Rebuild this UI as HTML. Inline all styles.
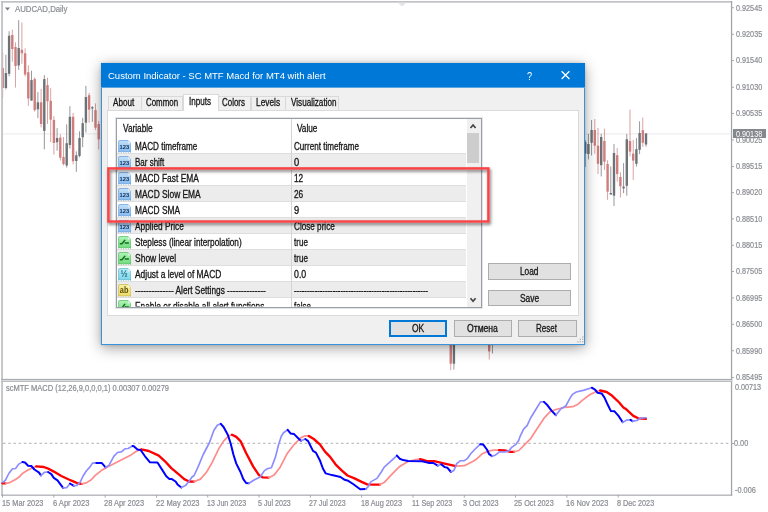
<!DOCTYPE html>
<html><head><meta charset="utf-8"><title>Custom Indicator - SC MTF Macd for MT4 with alert</title>
<style>
html,body{margin:0;padding:0;background:#fff;}
body{width:768px;height:512px;position:relative;overflow:hidden;filter:blur(0.4px);font-family:"Liberation Sans","DejaVu Sans",sans-serif;}
.t{position:absolute;white-space:pre;line-height:14px;height:14px;transform-origin:0 50%;display:block;}
#dlg{position:absolute;left:101px;top:63px;width:482px;height:280px;border:1px solid #3a92dc;background:#f0f0f0;box-shadow:0 3px 13px rgba(0,0,0,0.38),0 0 3px rgba(0,0,0,0.15);}
#title{position:absolute;left:101px;top:63px;width:484px;height:24px;background:#0078d7;border-bottom:1px solid #5aa4e0;}
#pane{position:absolute;left:107px;top:109.8px;width:469.8px;height:204.4px;background:#fff;border:1px solid #dadada;}
.tab{position:absolute;top:95.6px;height:14.2px;background:#f0f0f0;border:1px solid #d9d9d9;border-bottom:none;box-sizing:border-box;}
.tab.sel{top:93.7px;height:17.4px;background:#fff;border-color:#d9d9d9;}
#list{position:absolute;left:116px;top:117.5px;width:363.8px;height:188.6px;border:1px solid #9a9fa6;background:#fff;overflow:hidden;box-shadow:0 0 0 1px rgba(130,136,146,0.22);}
.row{position:absolute;left:0;width:349px;height:15px;border-bottom:1px solid #dedede;}
#coldiv{position:absolute;left:291.2px;top:118.5px;width:1px;height:188.4px;background:#d4d4d4;}
#sb{position:absolute;left:467px;top:118.5px;width:14px;height:188.5px;background:#f0f0f0;}
#thumb{position:absolute;left:467px;top:133px;width:12px;height:30px;background:#cdcdcd;}
.ic{position:absolute;}
.btn{position:absolute;box-sizing:border-box;background:#e1e1e1;border:1px solid #adadad;}
#hl{position:absolute;left:107.4px;top:167.4px;width:376.8px;height:51px;border:2px solid #e93a3e;filter:drop-shadow(1px 2px 2px rgba(0,0,0,0.55));}
#pbox{position:absolute;left:733px;top:129px;width:32.5px;height:9px;background:#85888d;}
</style></head><body>
<svg id="chart" width="768" height="512" viewBox="0 0 768 512" style="position:absolute;left:0;top:0">
<rect x="1.2" y="1" width="731" height="1.7" fill="#c0c2c5"/>
<rect x="730.9" y="1" width="1.3" height="494.6" fill="#a2a4a8"/>
<path d="M397.8,2.8 L406.4,2.8 L402.1,6.4 Z" fill="#e3e3e8"/>
<rect x="2.9" y="133.4" width="728.5" height="1" fill="#e9e9ea"/>
<path d="M5,7.4 L10,7.4 L7.5,10.4 Z" fill="#7c7c7c"/>
<rect x="2.25" y="52.6" width="0.9" height="45.2" fill="#cf7d7d" opacity="0.8"/><rect x="1.50" y="68.0" width="2.4" height="20.0" fill="#cf7d7d"/><rect x="5.45" y="54.7" width="0.9" height="34.6" fill="#6d7277" opacity="0.8"/><rect x="4.70" y="73.0" width="2.4" height="15.0" fill="#6d7277"/><rect x="8.65" y="31.2" width="0.9" height="45.2" fill="#6d7277" opacity="0.8"/><rect x="7.90" y="35.7" width="2.4" height="38.1" fill="#6d7277"/><rect x="11.85" y="29.6" width="0.9" height="32.1" fill="#cf7d7d" opacity="0.8"/><rect x="11.10" y="35.0" width="2.4" height="14.0" fill="#cf7d7d"/><rect x="15.05" y="42.4" width="0.9" height="45.2" fill="#cf7d7d" opacity="0.8"/><rect x="14.30" y="47.0" width="2.4" height="19.0" fill="#cf7d7d"/><rect x="18.25" y="20.2" width="0.9" height="49.6" fill="#6d7277" opacity="0.8"/><rect x="17.50" y="48.0" width="2.4" height="17.4" fill="#6d7277"/><rect x="21.45" y="22.3" width="0.9" height="41.5" fill="#cf7d7d" opacity="0.8"/><rect x="20.70" y="49.8" width="2.4" height="3.5" fill="#cf7d7d"/><rect x="24.65" y="48.3" width="0.9" height="28.1" fill="#cf7d7d" opacity="0.8"/><rect x="23.90" y="53.3" width="2.4" height="21.2" fill="#cf7d7d"/><rect x="27.85" y="65.3" width="0.9" height="40.6" fill="#cf7d7d" opacity="0.8"/><rect x="27.10" y="72.2" width="2.4" height="26.3" fill="#cf7d7d"/><rect x="31.05" y="70.7" width="0.9" height="29.9" fill="#6d7277" opacity="0.8"/><rect x="30.30" y="80.1" width="2.4" height="20.5" fill="#6d7277"/><rect x="34.25" y="77.2" width="0.9" height="34.3" fill="#cf7d7d" opacity="0.8"/><rect x="33.50" y="79.1" width="2.4" height="31.0" fill="#cf7d7d"/><rect x="37.45" y="92.1" width="0.9" height="26.1" fill="#6d7277" opacity="0.8"/><rect x="36.70" y="102.3" width="2.4" height="7.0" fill="#6d7277"/><rect x="40.65" y="89.0" width="0.9" height="38.4" fill="#cf7d7d" opacity="0.8"/><rect x="39.90" y="102.3" width="2.4" height="21.7" fill="#cf7d7d"/><rect x="43.85" y="75.2" width="0.9" height="74.1" fill="#6d7277" opacity="0.8"/><rect x="43.10" y="79.1" width="2.4" height="51.8" fill="#6d7277"/><rect x="47.05" y="77.7" width="0.9" height="46.2" fill="#cf7d7d" opacity="0.8"/><rect x="46.30" y="85.1" width="2.4" height="16.2" fill="#cf7d7d"/><rect x="50.25" y="88.2" width="0.9" height="54.0" fill="#cf7d7d" opacity="0.8"/><rect x="49.50" y="100.8" width="2.4" height="18.9" fill="#cf7d7d"/><rect x="53.45" y="116.1" width="0.9" height="38.4" fill="#cf7d7d" opacity="0.8"/><rect x="52.70" y="119.9" width="2.4" height="23.1" fill="#cf7d7d"/><rect x="56.65" y="128.1" width="0.9" height="22.6" fill="#6d7277" opacity="0.8"/><rect x="55.90" y="138.0" width="2.4" height="4.2" fill="#6d7277"/><rect x="59.85" y="134.3" width="0.9" height="26.2" fill="#cf7d7d" opacity="0.8"/><rect x="59.10" y="137.6" width="2.4" height="20.1" fill="#cf7d7d"/><rect x="63.05" y="137.0" width="0.9" height="28.5" fill="#cf7d7d" opacity="0.8"/><rect x="62.30" y="157.0" width="2.4" height="7.0" fill="#cf7d7d"/><rect x="66.25" y="124.3" width="0.9" height="43.3" fill="#6d7277" opacity="0.8"/><rect x="65.50" y="143.2" width="2.4" height="22.3" fill="#6d7277"/><rect x="69.45" y="106.2" width="0.9" height="42.4" fill="#6d7277" opacity="0.8"/><rect x="68.70" y="116.8" width="2.4" height="28.2" fill="#6d7277"/><rect x="72.65" y="113.0" width="0.9" height="51.3" fill="#cf7d7d" opacity="0.8"/><rect x="71.90" y="116.8" width="2.4" height="44.4" fill="#cf7d7d"/><rect x="75.85" y="151.4" width="0.9" height="20.4" fill="#6d7277" opacity="0.8"/><rect x="75.10" y="155.3" width="2.4" height="5.7" fill="#6d7277"/><rect x="79.05" y="131.3" width="0.9" height="26.0" fill="#6d7277" opacity="0.8"/><rect x="78.30" y="138.0" width="2.4" height="17.9" fill="#6d7277"/><rect x="82.25" y="117.8" width="0.9" height="29.4" fill="#6d7277" opacity="0.8"/><rect x="81.50" y="123.2" width="2.4" height="14.1" fill="#6d7277"/><rect x="85.45" y="85.8" width="0.9" height="46.7" fill="#6d7277" opacity="0.8"/><rect x="84.70" y="97.0" width="2.4" height="25.7" fill="#6d7277"/><rect x="88.65" y="92.8" width="0.9" height="29.9" fill="#cf7d7d" opacity="0.8"/><rect x="87.90" y="95.2" width="2.4" height="14.5" fill="#cf7d7d"/><rect x="91.85" y="106.2" width="0.9" height="15.7" fill="#6d7277" opacity="0.8"/><rect x="91.10" y="107.2" width="2.4" height="1.2" fill="#6d7277"/><rect x="95.05" y="103.4" width="0.9" height="26.6" fill="#cf7d7d" opacity="0.8"/><rect x="94.30" y="110.1" width="2.4" height="17.6" fill="#cf7d7d"/><rect x="98.25" y="121.0" width="0.9" height="28.3" fill="#cf7d7d" opacity="0.8"/><rect x="97.50" y="124.0" width="2.4" height="15.4" fill="#cf7d7d"/><rect x="645.55" y="133.4" width="0.9" height="13.3" fill="#6d7277" opacity="0.8"/><rect x="644.80" y="133.4" width="2.4" height="11.1" fill="#6d7277"/><rect x="642.35" y="117.6" width="0.9" height="29.3" fill="#cf7d7d" opacity="0.8"/><rect x="641.60" y="130.2" width="2.4" height="12.6" fill="#cf7d7d"/><rect x="639.15" y="121.3" width="0.9" height="32.8" fill="#6d7277" opacity="0.8"/><rect x="638.40" y="133.0" width="2.4" height="16.8" fill="#6d7277"/><rect x="635.95" y="138.1" width="0.9" height="28.5" fill="#6d7277" opacity="0.8"/><rect x="635.20" y="149.2" width="2.4" height="14.6" fill="#6d7277"/><rect x="632.75" y="139.9" width="0.9" height="40.0" fill="#cf7d7d" opacity="0.8"/><rect x="632.00" y="153.6" width="2.4" height="7.0" fill="#cf7d7d"/><rect x="629.55" y="109.6" width="0.9" height="46.8" fill="#cf7d7d" opacity="0.8"/><rect x="628.80" y="141.0" width="2.4" height="10.6" fill="#cf7d7d"/><rect x="626.35" y="134.0" width="0.9" height="61.7" fill="#6d7277" opacity="0.8"/><rect x="625.60" y="139.3" width="2.4" height="46.5" fill="#6d7277"/><rect x="623.15" y="163.1" width="0.9" height="30.0" fill="#6d7277" opacity="0.8"/><rect x="622.40" y="186.6" width="2.4" height="1.8" fill="#6d7277"/><rect x="619.95" y="172.3" width="0.9" height="25.2" fill="#cf7d7d" opacity="0.8"/><rect x="619.20" y="177.0" width="2.4" height="9.3" fill="#cf7d7d"/><rect x="616.75" y="148.0" width="0.9" height="33.7" fill="#cf7d7d" opacity="0.8"/><rect x="616.00" y="155.2" width="2.4" height="18.8" fill="#cf7d7d"/><rect x="613.55" y="144.0" width="0.9" height="62.0" fill="#6d7277" opacity="0.8"/><rect x="612.80" y="153.0" width="2.4" height="42.7" fill="#6d7277"/><rect x="610.35" y="166.4" width="0.9" height="28.1" fill="#6d7277" opacity="0.8"/><rect x="609.60" y="193.0" width="2.4" height="1.5" fill="#6d7277"/><rect x="607.15" y="160.3" width="0.9" height="39.5" fill="#cf7d7d" opacity="0.8"/><rect x="606.40" y="164.0" width="2.4" height="27.6" fill="#cf7d7d"/><rect x="603.95" y="128.7" width="0.9" height="41.3" fill="#cf7d7d" opacity="0.8"/><rect x="603.20" y="141.0" width="2.4" height="20.7" fill="#cf7d7d"/><rect x="600.75" y="133.8" width="0.9" height="42.6" fill="#6d7277" opacity="0.8"/><rect x="600.00" y="137.0" width="2.4" height="28.2" fill="#6d7277"/><rect x="597.55" y="128.0" width="0.9" height="46.0" fill="#cf7d7d" opacity="0.8"/><rect x="596.80" y="145.7" width="2.4" height="18.1" fill="#cf7d7d"/><rect x="594.35" y="119.0" width="0.9" height="34.8" fill="#cf7d7d" opacity="0.8"/><rect x="593.60" y="130.0" width="2.4" height="15.7" fill="#cf7d7d"/><rect x="591.15" y="120.0" width="0.9" height="35.5" fill="#6d7277" opacity="0.8"/><rect x="590.40" y="130.0" width="2.4" height="12.8" fill="#6d7277"/><rect x="587.95" y="134.0" width="0.9" height="25.4" fill="#6d7277" opacity="0.8"/><rect x="587.20" y="144.0" width="2.4" height="10.0" fill="#6d7277"/><rect x="584.75" y="140.0" width="0.9" height="27.0" fill="#6d7277" opacity="0.8"/><rect x="584.00" y="142.0" width="2.4" height="11.5" fill="#6d7277"/><rect x="450.30" y="330.0" width="0.9" height="40.2" fill="#cf7d7d" opacity="0.8"/><rect x="449.55" y="330.0" width="2.4" height="33.7" fill="#cf7d7d"/><rect x="453.45" y="330.0" width="0.9" height="39.6" fill="#6d7277" opacity="0.8"/><rect x="452.70" y="330.0" width="2.4" height="33.7" fill="#6d7277"/><rect x="488.75" y="330.0" width="0.9" height="29.6" fill="#cf7d7d" opacity="0.8"/><rect x="488.00" y="330.0" width="2.4" height="21.4" fill="#cf7d7d"/><rect x="491.95" y="330.0" width="0.9" height="23.5" fill="#6d7277" opacity="0.8"/><rect x="491.20" y="330.0" width="2.4" height="1.2" fill="#6d7277"/>
<rect x="1.2" y="1" width="1.7" height="494.6" fill="#bdbfc2"/>
<rect x="1.2" y="378.9" width="731" height="1" fill="#9a9da2"/>
<rect x="1.2" y="379.9" width="731" height="1" fill="#dcdddf"/>
<rect x="1.2" y="380.9" width="731" height="1" fill="#b3b5b9"/>
<rect x="1.2" y="494.6" width="731" height="1.1" fill="#a0a2a6"/>
<path d="M3,443.3 H731" stroke="#a9a9a9" stroke-width="0.9" stroke-dasharray="2.6,2.6" fill="none"/>
<path d="M2.5,483.3 L5.6,483.4" fill="none" stroke="#ff0000" stroke-width="2.35" stroke-linejoin="round" stroke-linecap="round"/><path d="M5.6,483.4 L8.8,482.9 L15.0,479.8 L18.8,477.3 L23.1,472.9 L28.8,469.5 L36.3,466.4" fill="none" stroke="#ff8c8c" stroke-width="1.7" stroke-linejoin="round" stroke-linecap="round"/><path d="M36.3,466.4 L43.8,467.0 L47.5,468.3 L53.8,471.6 L61.3,476.0 L68.8,479.5 L73.8,481.6 L78.1,483.5 L81.9,483.9" fill="none" stroke="#ff0000" stroke-width="2.35" stroke-linejoin="round" stroke-linecap="round"/><path d="M81.9,483.9 L86.3,482.9 L91.3,479.8 L95.0,475.6 L101.3,470.6 L107.5,466.9 L130.0,455.6 L136.3,451.3 L141.3,449.4" fill="none" stroke="#ff8c8c" stroke-width="1.7" stroke-linejoin="round" stroke-linecap="round"/><path d="M141.3,449.4 L148.8,451.0 L158.8,455.6 L165.0,461.3 L171.3,468.1 L178.8,474.4 L184.2,479.1 L189.1,481.5 L194.1,481.6" fill="none" stroke="#ff0000" stroke-width="2.35" stroke-linejoin="round" stroke-linecap="round"/><path d="M194.1,481.6 L200.4,479.1 L206.7,472.0 L212.3,462.2 L218.7,448.8 L223.6,441.1 L228.5,436.2 L232.0,434.8" fill="none" stroke="#ff8c8c" stroke-width="1.7" stroke-linejoin="round" stroke-linecap="round"/><path d="M232.0,434.8 L236.3,436.9 L240.5,441.1 L246.1,453.0 L253.1,466.4 L258.8,474.9 L263.0,477.4 L268.6,477.7" fill="none" stroke="#ff0000" stroke-width="2.35" stroke-linejoin="round" stroke-linecap="round"/><path d="M268.6,477.7 L274.2,474.9 L279.8,467.8 L287.0,453.8 L294.1,444.6 L301.1,437.6 L305.3,435.8 L308.8,435.9" fill="none" stroke="#ff8c8c" stroke-width="1.7" stroke-linejoin="round" stroke-linecap="round"/><path d="M308.8,435.9 L313.8,439.0 L320.1,444.6 L325.0,451.6 L329.9,456.6 L335.5,464.3 L341.9,470.6 L347.5,475.5 L354.5,478.4 L361.6,481.9 L367.2,484.4 L373.5,484.7 L379.9,484.6" fill="none" stroke="#ff0000" stroke-width="2.35" stroke-linejoin="round" stroke-linecap="round"/><path d="M379.9,484.6 L384.1,482.6 L391.3,474.9 L399.7,466.4 L408.1,461.5 L415.2,459.7 L420.1,459.1" fill="none" stroke="#ff8c8c" stroke-width="1.7" stroke-linejoin="round" stroke-linecap="round"/><path d="M420.1,459.1 L426.4,460.8 L434.1,461.1 L444.7,463.6 L455.9,466.1" fill="none" stroke="#ff0000" stroke-width="2.35" stroke-linejoin="round" stroke-linecap="round"/><path d="M455.9,466.1 L464.4,465.7 L472.8,461.5 L475.6,459.8 L482.2,453.8 L487.8,451.4 L493.4,450.0 L499.1,450.1" fill="none" stroke="#ff8c8c" stroke-width="1.7" stroke-linejoin="round" stroke-linecap="round"/><path d="M499.1,450.1 L504.7,450.3 L510.3,451.9 L514.1,451.8" fill="none" stroke="#ff0000" stroke-width="2.35" stroke-linejoin="round" stroke-linecap="round"/><path d="M514.1,451.8 L518.8,450.5 L524.4,444.8 L530.9,438.3 L537.7,427.8 L544.7,417.3 L550.3,411.6 L555.9,409.5 L564.4,407.4 L572.8,406.7 L578.4,403.9 L581.3,401.1 L589.7,394.8 L596.7,391.3 L600.2,390.5" fill="none" stroke="#ff8c8c" stroke-width="1.7" stroke-linejoin="round" stroke-linecap="round"/><path d="M600.2,390.5 L606.6,392.0 L612.2,395.8 L619.2,402.5 L623.4,407.4 L626.3,409.3 L633.3,415.9 L638.2,418.3 L645.9,418.8" fill="none" stroke="#ff0000" stroke-width="2.35" stroke-linejoin="round" stroke-linecap="round"/>
<path d="M3.1,482.3 L5.6,479.8 L8.8,473.5 L12.5,468.8 L15.6,468.5 L18.8,464.1 L22.5,462.0" fill="none" stroke="#8c8cff" stroke-width="1.65" stroke-linejoin="round" stroke-linecap="round"/><path d="M22.5,462.0 L25.0,462.5 L28.1,465.8 L31.3,466.0 L34.4,469.5 L38.8,472.3 L41.0,475.4" fill="none" stroke="#0000ff" stroke-width="2.0" stroke-linejoin="round" stroke-linecap="round"/><path d="M41.0,475.4 L44.4,472.3 L48.1,472.0" fill="none" stroke="#8c8cff" stroke-width="1.65" stroke-linejoin="round" stroke-linecap="round"/><path d="M48.1,472.0 L51.3,474.1 L53.8,477.9 L57.5,480.4 L63.1,487.9" fill="none" stroke="#0000ff" stroke-width="2.0" stroke-linejoin="round" stroke-linecap="round"/><path d="M63.1,487.9 L66.9,487.6 L70.0,483.5" fill="none" stroke="#8c8cff" stroke-width="1.65" stroke-linejoin="round" stroke-linecap="round"/><path d="M70.0,483.5 L73.8,485.8" fill="none" stroke="#0000ff" stroke-width="2.0" stroke-linejoin="round" stroke-linecap="round"/><path d="M73.8,485.8 L76.9,485.4 L80.0,482.3 L83.1,476.0 L86.3,471.0 L90.0,466.9 L92.5,463.1 L96.3,462.9" fill="none" stroke="#8c8cff" stroke-width="1.65" stroke-linejoin="round" stroke-linecap="round"/><path d="M96.3,462.9 L101.9,463.1 L105.6,467.3" fill="none" stroke="#0000ff" stroke-width="2.0" stroke-linejoin="round" stroke-linecap="round"/><path d="M105.6,467.3 L108.8,465.6 L113.8,456.3 L117.5,452.5 L121.3,451.9 L125.0,448.8 L128.1,448.5 L132.5,446.0" fill="none" stroke="#8c8cff" stroke-width="1.65" stroke-linejoin="round" stroke-linecap="round"/><path d="M132.5,446.0 L133.8,446.3 L137.5,449.4 L140.6,450.0 L145.0,456.3 L150.0,462.3 L157.5,462.5 L161.9,469.4 L166.3,476.3 L169.4,479.0 L171.9,479.1 L175.6,481.5 L177.5,484.4 L181.3,487.5" fill="none" stroke="#0000ff" stroke-width="2.0" stroke-linejoin="round" stroke-linecap="round"/><path d="M181.3,487.5 L185.6,485.4 L189.1,481.2 L192.0,477.0 L194.1,475.5 L198.3,466.4 L203.2,454.5 L209.5,442.5 L213.8,430.5 L217.3,425.3 L220.8,423.8" fill="none" stroke="#8c8cff" stroke-width="1.65" stroke-linejoin="round" stroke-linecap="round"/><path d="M220.8,423.8 L223.6,427.0 L227.8,434.8 L230.6,443.2 L233.4,454.5 L236.3,463.6 L240.5,472.0 L243.3,479.1 L246.1,483.0 L248.9,483.3" fill="none" stroke="#0000ff" stroke-width="2.0" stroke-linejoin="round" stroke-linecap="round"/><path d="M248.9,483.3 L254.5,479.8 L260.2,477.0 L264.4,470.6 L267.9,468.5 L271.4,467.8 L275.6,456.6 L278.4,445.3 L281.3,436.2 L283.5,432.7 L287.7,429.8" fill="none" stroke="#8c8cff" stroke-width="1.65" stroke-linejoin="round" stroke-linecap="round"/><path d="M287.7,429.8 L290.5,433.4 L294.1,434.1 L299.7,439.7 L301.1,440.8" fill="none" stroke="#0000ff" stroke-width="2.0" stroke-linejoin="round" stroke-linecap="round"/><path d="M301.1,440.8 L305.3,439.0" fill="none" stroke="#8c8cff" stroke-width="1.65" stroke-linejoin="round" stroke-linecap="round"/><path d="M305.3,439.0 L308.1,441.1 L313.0,450.9 L315.9,452.6 L320.1,460.8 L322.9,468.5 L325.7,473.4 L332.0,475.1 L340.5,477.0 L344.7,479.8 L348.2,480.8 L353.1,484.0 L360.2,489.2 L365.8,489.1" fill="none" stroke="#0000ff" stroke-width="2.0" stroke-linejoin="round" stroke-linecap="round"/><path d="M365.8,489.1 L368.6,486.1 L370.7,481.9 L377.0,478.4 L381.3,472.0 L384.2,467.1 L389.8,462.2 L396.9,455.6" fill="none" stroke="#8c8cff" stroke-width="1.65" stroke-linejoin="round" stroke-linecap="round"/><path d="M396.9,455.6 L399.7,458.7 L403.2,460.1 L408.1,461.1 L422.2,461.2 L428.5,462.9 L433.4,463.0 L437.7,465.7" fill="none" stroke="#0000ff" stroke-width="2.0" stroke-linejoin="round" stroke-linecap="round"/><path d="M437.7,465.7 L441.2,464.3" fill="none" stroke="#8c8cff" stroke-width="1.65" stroke-linejoin="round" stroke-linecap="round"/><path d="M441.2,464.3 L444.7,467.1 L447.5,467.8 L451.0,472.0" fill="none" stroke="#0000ff" stroke-width="2.0" stroke-linejoin="round" stroke-linecap="round"/><path d="M451.0,472.0 L453.8,470.6 L456.7,463.6 L460.2,460.8 L464.4,460.7 L467.2,458.7 L470.7,453.8 L474.7,449.5 L480.3,444.2" fill="none" stroke="#8c8cff" stroke-width="1.65" stroke-linejoin="round" stroke-linecap="round"/><path d="M480.3,444.2 L483.1,444.4 L486.9,449.5 L489.2,454.2 L492.0,456.1" fill="none" stroke="#0000ff" stroke-width="2.0" stroke-linejoin="round" stroke-linecap="round"/><path d="M492.0,456.1 L495.3,455.2 L499.5,451.9 L502.8,452.0 L505.2,451.9 L508.9,450.9 L511.3,447.7 L515.9,444.4 L518.8,440.2 L520.1,436.3 L523.6,429.2 L527.1,425.7 L530.6,418.0 L536.3,408.8 L540.5,401.8 L544.0,401.9" fill="none" stroke="#8c8cff" stroke-width="1.65" stroke-linejoin="round" stroke-linecap="round"/><path d="M544.0,401.9 L547.5,405.3 L551.7,410.9 L555.9,415.2" fill="none" stroke="#0000ff" stroke-width="2.0" stroke-linejoin="round" stroke-linecap="round"/><path d="M555.9,415.2 L560.9,408.8 L565.8,406.0 L570.7,396.9 L572.8,394.1 L576.3,392.0 L584.1,390.1 L591.8,387.7" fill="none" stroke="#8c8cff" stroke-width="1.65" stroke-linejoin="round" stroke-linecap="round"/><path d="M591.8,387.7 L595.3,389.8 L597.4,392.7 L601.6,393.4 L604.5,397.6 L608.0,405.3 L610.8,410.9 L614.3,411.2 L618.5,415.9 L622.7,422.2" fill="none" stroke="#0000ff" stroke-width="2.0" stroke-linejoin="round" stroke-linecap="round"/><path d="M622.7,422.2 L627.0,420.1 L630.5,419.8" fill="none" stroke="#8c8cff" stroke-width="1.65" stroke-linejoin="round" stroke-linecap="round"/><path d="M630.5,419.8 L632.6,421.1" fill="none" stroke="#0000ff" stroke-width="2.0" stroke-linejoin="round" stroke-linecap="round"/><path d="M632.6,421.1 L636.8,420.5 L640.3,418.3 L645.9,417.7" fill="none" stroke="#8c8cff" stroke-width="1.65" stroke-linejoin="round" stroke-linecap="round"/>
<rect x="2.1" y="495" width="0.9" height="2.6" fill="#a0a2a6"/><rect x="53.4" y="495" width="0.9" height="2.6" fill="#a0a2a6"/><rect x="104.7" y="495" width="0.9" height="2.6" fill="#a0a2a6"/><rect x="156.0" y="495" width="0.9" height="2.6" fill="#a0a2a6"/><rect x="207.3" y="495" width="0.9" height="2.6" fill="#a0a2a6"/><rect x="258.6" y="495" width="0.9" height="2.6" fill="#a0a2a6"/><rect x="309.9" y="495" width="0.9" height="2.6" fill="#a0a2a6"/><rect x="361.2" y="495" width="0.9" height="2.6" fill="#a0a2a6"/><rect x="412.5" y="495" width="0.9" height="2.6" fill="#a0a2a6"/><rect x="463.8" y="495" width="0.9" height="2.6" fill="#a0a2a6"/><rect x="515.1" y="495" width="0.9" height="2.6" fill="#a0a2a6"/><rect x="566.4" y="495" width="0.9" height="2.6" fill="#a0a2a6"/><rect x="617.7" y="495" width="0.9" height="2.6" fill="#a0a2a6"/><rect x="732" y="7.3" width="2" height="0.9" fill="#a0a2a6"/><rect x="732" y="33.8" width="2" height="0.9" fill="#a0a2a6"/><rect x="732" y="60.1" width="2" height="0.9" fill="#a0a2a6"/><rect x="732" y="86.8" width="2" height="0.9" fill="#a0a2a6"/><rect x="732" y="113.1" width="2" height="0.9" fill="#a0a2a6"/><rect x="732" y="139.5" width="2" height="0.9" fill="#a0a2a6"/><rect x="732" y="166.0" width="2" height="0.9" fill="#a0a2a6"/><rect x="732" y="192.2" width="2" height="0.9" fill="#a0a2a6"/><rect x="732" y="218.4" width="2" height="0.9" fill="#a0a2a6"/><rect x="732" y="244.8" width="2" height="0.9" fill="#a0a2a6"/><rect x="732" y="271.1" width="2" height="0.9" fill="#a0a2a6"/><rect x="732" y="297.5" width="2" height="0.9" fill="#a0a2a6"/><rect x="732" y="323.8" width="2" height="0.9" fill="#a0a2a6"/><rect x="732" y="350.3" width="2" height="0.9" fill="#a0a2a6"/><rect x="732" y="377.0" width="2" height="0.9" fill="#a0a2a6"/><rect x="732" y="443.1" width="2" height="0.9" fill="#a0a2a6"/></svg>
<div id="dlg"></div>
<div id="title"></div>
<div id="pane"></div>
<div class="tab" style="left:108.3px;width:33.4px"></div>
<div class="tab" style="left:141.2px;width:42.1px"></div>
<div class="tab" style="left:218.2px;width:33px"></div>
<div class="tab" style="left:250.7px;width:35.1px"></div>
<div class="tab" style="left:285.3px;width:54px"></div>
<div class="tab sel" style="left:182.6px;width:36.4px"></div>
<div id="list"><div class="row" style="top:19.5px;background:#ffffff"></div><div class="row" style="top:35.5px;background:#ececec"></div><div class="row" style="top:51.5px;background:#ffffff"></div><div class="row" style="top:67.5px;background:#ececec"></div><div class="row" style="top:83.5px;background:#ffffff"></div><div class="row" style="top:99.5px;background:#ececec"></div><div class="row" style="top:115.5px;background:#ffffff"></div><div class="row" style="top:131.5px;background:#ececec"></div><div class="row" style="top:147.5px;background:#ffffff"></div><div class="row" style="top:163.5px;background:#ececec"></div><div class="row" style="top:179.5px;background:#ffffff"></div></div>
<div id="coldiv"></div>
<div id="sb"></div><div id="thumb"></div>
<svg style="position:absolute;left:466px;top:118px" width="15" height="190" viewBox="0 0 15 190"><path d="M4.5,10 L7.05,7 L9.6,10" stroke="#454545" stroke-width="1.7" fill="none"/><path d="M4.5,180.2 L7.05,183.2 L9.6,180.2" stroke="#454545" stroke-width="1.7" fill="none"/></svg>
<div style="position:absolute;left:0;top:0;width:768px;height:306.6px;overflow:hidden"><svg class="ic" style="left:118.1px;top:140.1px" width="13.4" height="12.8" viewBox="0 0 13.4 12.8"><defs><linearGradient id="gb140" x1="0" y1="0" x2="0" y2="1"><stop offset="0" stop-color="#c4e0f8"/><stop offset="1" stop-color="#86baec"/></linearGradient></defs><path d="M0.6,1.6 Q0.6,0.5 1.7,0.5 L10,0.5 L12.9,3.4 L12.9,12.4 L11.6,11.4 L10.4,12.3 L9.2,11.4 L8,12.3 L6.8,11.4 L5.6,12.3 L4.4,11.4 L3.2,12.3 L2,11.4 L0.6,12.3 Z" fill="url(#gb140)" stroke="#4a90d8" stroke-width="0.7" stroke-opacity="0.85"/><path d="M10,0.5 L10,3.4 L12.9,3.4 Z" fill="#ffffff" fill-opacity="0.55"/><text x="6.4" y="8.6" font-size="5.8" font-weight="bold" text-anchor="middle" fill="#0c2c5c" font-family="Liberation Sans, sans-serif">123</text></svg><svg class="ic" style="left:118.1px;top:156.1px" width="13.4" height="12.8" viewBox="0 0 13.4 12.8"><defs><linearGradient id="gb156" x1="0" y1="0" x2="0" y2="1"><stop offset="0" stop-color="#c4e0f8"/><stop offset="1" stop-color="#86baec"/></linearGradient></defs><path d="M0.6,1.6 Q0.6,0.5 1.7,0.5 L10,0.5 L12.9,3.4 L12.9,12.4 L11.6,11.4 L10.4,12.3 L9.2,11.4 L8,12.3 L6.8,11.4 L5.6,12.3 L4.4,11.4 L3.2,12.3 L2,11.4 L0.6,12.3 Z" fill="url(#gb156)" stroke="#4a90d8" stroke-width="0.7" stroke-opacity="0.85"/><path d="M10,0.5 L10,3.4 L12.9,3.4 Z" fill="#ffffff" fill-opacity="0.55"/><text x="6.4" y="8.6" font-size="5.8" font-weight="bold" text-anchor="middle" fill="#0c2c5c" font-family="Liberation Sans, sans-serif">123</text></svg><svg class="ic" style="left:118.1px;top:172.1px" width="13.4" height="12.8" viewBox="0 0 13.4 12.8"><defs><linearGradient id="gb172" x1="0" y1="0" x2="0" y2="1"><stop offset="0" stop-color="#c4e0f8"/><stop offset="1" stop-color="#86baec"/></linearGradient></defs><path d="M0.6,1.6 Q0.6,0.5 1.7,0.5 L10,0.5 L12.9,3.4 L12.9,12.4 L11.6,11.4 L10.4,12.3 L9.2,11.4 L8,12.3 L6.8,11.4 L5.6,12.3 L4.4,11.4 L3.2,12.3 L2,11.4 L0.6,12.3 Z" fill="url(#gb172)" stroke="#4a90d8" stroke-width="0.7" stroke-opacity="0.85"/><path d="M10,0.5 L10,3.4 L12.9,3.4 Z" fill="#ffffff" fill-opacity="0.55"/><text x="6.4" y="8.6" font-size="5.8" font-weight="bold" text-anchor="middle" fill="#0c2c5c" font-family="Liberation Sans, sans-serif">123</text></svg><svg class="ic" style="left:118.1px;top:188.1px" width="13.4" height="12.8" viewBox="0 0 13.4 12.8"><defs><linearGradient id="gb188" x1="0" y1="0" x2="0" y2="1"><stop offset="0" stop-color="#c4e0f8"/><stop offset="1" stop-color="#86baec"/></linearGradient></defs><path d="M0.6,1.6 Q0.6,0.5 1.7,0.5 L10,0.5 L12.9,3.4 L12.9,12.4 L11.6,11.4 L10.4,12.3 L9.2,11.4 L8,12.3 L6.8,11.4 L5.6,12.3 L4.4,11.4 L3.2,12.3 L2,11.4 L0.6,12.3 Z" fill="url(#gb188)" stroke="#4a90d8" stroke-width="0.7" stroke-opacity="0.85"/><path d="M10,0.5 L10,3.4 L12.9,3.4 Z" fill="#ffffff" fill-opacity="0.55"/><text x="6.4" y="8.6" font-size="5.8" font-weight="bold" text-anchor="middle" fill="#0c2c5c" font-family="Liberation Sans, sans-serif">123</text></svg><svg class="ic" style="left:118.1px;top:204.1px" width="13.4" height="12.8" viewBox="0 0 13.4 12.8"><defs><linearGradient id="gb204" x1="0" y1="0" x2="0" y2="1"><stop offset="0" stop-color="#c4e0f8"/><stop offset="1" stop-color="#86baec"/></linearGradient></defs><path d="M0.6,1.6 Q0.6,0.5 1.7,0.5 L10,0.5 L12.9,3.4 L12.9,12.4 L11.6,11.4 L10.4,12.3 L9.2,11.4 L8,12.3 L6.8,11.4 L5.6,12.3 L4.4,11.4 L3.2,12.3 L2,11.4 L0.6,12.3 Z" fill="url(#gb204)" stroke="#4a90d8" stroke-width="0.7" stroke-opacity="0.85"/><path d="M10,0.5 L10,3.4 L12.9,3.4 Z" fill="#ffffff" fill-opacity="0.55"/><text x="6.4" y="8.6" font-size="5.8" font-weight="bold" text-anchor="middle" fill="#0c2c5c" font-family="Liberation Sans, sans-serif">123</text></svg><svg class="ic" style="left:118.1px;top:220.1px" width="13.4" height="12.8" viewBox="0 0 13.4 12.8"><defs><linearGradient id="gb220" x1="0" y1="0" x2="0" y2="1"><stop offset="0" stop-color="#c4e0f8"/><stop offset="1" stop-color="#86baec"/></linearGradient></defs><path d="M0.6,1.6 Q0.6,0.5 1.7,0.5 L10,0.5 L12.9,3.4 L12.9,12.4 L11.6,11.4 L10.4,12.3 L9.2,11.4 L8,12.3 L6.8,11.4 L5.6,12.3 L4.4,11.4 L3.2,12.3 L2,11.4 L0.6,12.3 Z" fill="url(#gb220)" stroke="#4a90d8" stroke-width="0.7" stroke-opacity="0.85"/><path d="M10,0.5 L10,3.4 L12.9,3.4 Z" fill="#ffffff" fill-opacity="0.55"/><text x="6.4" y="8.6" font-size="5.8" font-weight="bold" text-anchor="middle" fill="#0c2c5c" font-family="Liberation Sans, sans-serif">123</text></svg><svg class="ic" style="left:118.1px;top:236.1px" width="13.4" height="12.8" viewBox="0 0 13.4 12.8"><defs><linearGradient id="gg236" x1="0" y1="0" x2="0" y2="1"><stop offset="0" stop-color="#b0f4b8"/><stop offset="1" stop-color="#6edc7a"/></linearGradient></defs><path d="M0.6,1.6 Q0.6,0.5 1.7,0.5 L10,0.5 L12.9,3.4 L12.9,12.4 L11.6,11.4 L10.4,12.3 L9.2,11.4 L8,12.3 L6.8,11.4 L5.6,12.3 L4.4,11.4 L3.2,12.3 L2,11.4 L0.6,12.3 Z" fill="url(#gg236)" stroke="#3cae4c" stroke-width="0.7" stroke-opacity="0.85"/><path d="M10,0.5 L10,3.4 L12.9,3.4 Z" fill="#ffffff" fill-opacity="0.55"/><path d="M2.4,7.8 L4,7.8 L6.8,4.2 M7.2,7 L10.4,7" stroke="#14701f" stroke-width="1.45" fill="none" stroke-linecap="round"/></svg><svg class="ic" style="left:118.1px;top:252.1px" width="13.4" height="12.8" viewBox="0 0 13.4 12.8"><defs><linearGradient id="gg252" x1="0" y1="0" x2="0" y2="1"><stop offset="0" stop-color="#b0f4b8"/><stop offset="1" stop-color="#6edc7a"/></linearGradient></defs><path d="M0.6,1.6 Q0.6,0.5 1.7,0.5 L10,0.5 L12.9,3.4 L12.9,12.4 L11.6,11.4 L10.4,12.3 L9.2,11.4 L8,12.3 L6.8,11.4 L5.6,12.3 L4.4,11.4 L3.2,12.3 L2,11.4 L0.6,12.3 Z" fill="url(#gg252)" stroke="#3cae4c" stroke-width="0.7" stroke-opacity="0.85"/><path d="M10,0.5 L10,3.4 L12.9,3.4 Z" fill="#ffffff" fill-opacity="0.55"/><path d="M2.4,7.8 L4,7.8 L6.8,4.2 M7.2,7 L10.4,7" stroke="#14701f" stroke-width="1.45" fill="none" stroke-linecap="round"/></svg><svg class="ic" style="left:118.1px;top:268.1px" width="13.4" height="12.8" viewBox="0 0 13.4 12.8"><defs><linearGradient id="gc268" x1="0" y1="0" x2="0" y2="1"><stop offset="0" stop-color="#b8ecf6"/><stop offset="1" stop-color="#7ed4e8"/></linearGradient></defs><path d="M0.6,1.6 Q0.6,0.5 1.7,0.5 L10,0.5 L12.9,3.4 L12.9,12.4 L11.6,11.4 L10.4,12.3 L9.2,11.4 L8,12.3 L6.8,11.4 L5.6,12.3 L4.4,11.4 L3.2,12.3 L2,11.4 L0.6,12.3 Z" fill="url(#gc268)" stroke="#40a4c0" stroke-width="0.7" stroke-opacity="0.85"/><path d="M10,0.5 L10,3.4 L12.9,3.4 Z" fill="#ffffff" fill-opacity="0.55"/><text x="6.2" y="8.6" font-size="8.6" font-weight="bold" text-anchor="middle" fill="#146a84" font-family="Liberation Sans, sans-serif">½</text></svg><svg class="ic" style="left:118.1px;top:284.1px" width="13.4" height="12.8" viewBox="0 0 13.4 12.8"><defs><linearGradient id="gy284" x1="0" y1="0" x2="0" y2="1"><stop offset="0" stop-color="#f8f0a4"/><stop offset="1" stop-color="#ecdc64"/></linearGradient></defs><path d="M0.6,1.6 Q0.6,0.5 1.7,0.5 L10,0.5 L12.9,3.4 L12.9,12.4 L11.6,11.4 L10.4,12.3 L9.2,11.4 L8,12.3 L6.8,11.4 L5.6,12.3 L4.4,11.4 L3.2,12.3 L2,11.4 L0.6,12.3 Z" fill="url(#gy284)" stroke="#c0a838" stroke-width="0.7" stroke-opacity="0.85"/><path d="M10,0.5 L10,3.4 L12.9,3.4 Z" fill="#ffffff" fill-opacity="0.55"/><text x="6.2" y="9" font-size="8.2" font-weight="bold" text-anchor="middle" fill="#5c4e04" font-family="Liberation Sans, sans-serif" transform="translate(0.6,0) scale(0.9,1)">ab</text></svg><svg class="ic" style="left:118.1px;top:300.1px" width="13.4" height="12.8" viewBox="0 0 13.4 12.8"><defs><linearGradient id="gg300" x1="0" y1="0" x2="0" y2="1"><stop offset="0" stop-color="#b0f4b8"/><stop offset="1" stop-color="#6edc7a"/></linearGradient></defs><path d="M0.6,1.6 Q0.6,0.5 1.7,0.5 L10,0.5 L12.9,3.4 L12.9,12.4 L11.6,11.4 L10.4,12.3 L9.2,11.4 L8,12.3 L6.8,11.4 L5.6,12.3 L4.4,11.4 L3.2,12.3 L2,11.4 L0.6,12.3 Z" fill="url(#gg300)" stroke="#3cae4c" stroke-width="0.7" stroke-opacity="0.85"/><path d="M10,0.5 L10,3.4 L12.9,3.4 Z" fill="#ffffff" fill-opacity="0.55"/><path d="M2.4,7.8 L4,7.8 L6.8,4.2 M7.2,7 L10.4,7" stroke="#14701f" stroke-width="1.45" fill="none" stroke-linecap="round"/></svg></div>
<div class="btn" style="left:488px;top:263px;width:82.6px;height:16.8px"></div>
<div class="btn" style="left:488px;top:289.5px;width:82.6px;height:16.8px"></div>
<div class="btn" style="left:388.8px;top:320.4px;width:58.2px;height:16.2px;border:2px solid #0078d7"></div>
<div class="btn" style="left:453.6px;top:320.4px;width:58.2px;height:16.2px"></div>
<div class="btn" style="left:518.3px;top:320.4px;width:58.4px;height:16.2px"></div>
<svg style="position:absolute;left:576px;top:335px" width="9" height="9" viewBox="0 0 9 9"><g fill="#bcbcbc"><rect x="6" y="6" width="1.4" height="1.4"/><rect x="6" y="3.6" width="1.4" height="1.4"/><rect x="3.6" y="6" width="1.4" height="1.4"/><rect x="6" y="1.2" width="1.4" height="1.4"/><rect x="3.6" y="3.6" width="1.4" height="1.4"/><rect x="1.2" y="6" width="1.4" height="1.4"/></g></svg>
<svg style="position:absolute;left:520px;top:66px" width="60" height="20" viewBox="0 0 60 20"><path d="M41.6,5.2 L49.4,13 M49.4,5.2 L41.6,13" stroke="#fff" stroke-width="1.25" fill="none"/><text x="12" y="13.6" font-size="11.5" fill="#fff" text-anchor="middle" transform="scale(0.8,1)" font-family="Liberation Sans, sans-serif">?</text></svg>
<span class="t" id="t0" style="left:15.0px;top:1.60px;font-size:8.6px;color:#8b8e93;transform:scaleX(0.9086);-webkit-text-stroke:0.22px;">AUDCAD,Daily</span><span class="t" id="t1" style="left:736.3px;top:0.50px;font-size:8.6px;color:#8b8e93;transform:scaleX(0.8430);-webkit-text-stroke:0.22px;">0.92545</span><span class="t" id="t2" style="left:736.3px;top:27.00px;font-size:8.6px;color:#8b8e93;transform:scaleX(0.8430);-webkit-text-stroke:0.22px;">0.92035</span><span class="t" id="t3" style="left:736.3px;top:53.30px;font-size:8.6px;color:#8b8e93;transform:scaleX(0.8430);-webkit-text-stroke:0.22px;">0.91540</span><span class="t" id="t4" style="left:736.3px;top:80.00px;font-size:8.6px;color:#8b8e93;transform:scaleX(0.8430);-webkit-text-stroke:0.22px;">0.91030</span><span class="t" id="t5" style="left:736.3px;top:106.30px;font-size:8.6px;color:#8b8e93;transform:scaleX(0.8430);-webkit-text-stroke:0.22px;">0.90535</span><span class="t" id="t6" style="left:736.3px;top:132.70px;font-size:8.6px;color:#8b8e93;transform:scaleX(0.8430);-webkit-text-stroke:0.22px;">0.90025</span><span class="t" id="t7" style="left:736.3px;top:159.20px;font-size:8.6px;color:#8b8e93;transform:scaleX(0.8430);-webkit-text-stroke:0.22px;">0.89515</span><span class="t" id="t8" style="left:736.3px;top:185.40px;font-size:8.6px;color:#8b8e93;transform:scaleX(0.8430);-webkit-text-stroke:0.22px;">0.89020</span><span class="t" id="t9" style="left:736.3px;top:211.60px;font-size:8.6px;color:#8b8e93;transform:scaleX(0.8430);-webkit-text-stroke:0.22px;">0.88510</span><span class="t" id="t10" style="left:736.3px;top:238.00px;font-size:8.6px;color:#8b8e93;transform:scaleX(0.8430);-webkit-text-stroke:0.22px;">0.88015</span><span class="t" id="t11" style="left:736.3px;top:264.30px;font-size:8.6px;color:#8b8e93;transform:scaleX(0.8430);-webkit-text-stroke:0.22px;">0.87505</span><span class="t" id="t12" style="left:736.3px;top:290.70px;font-size:8.6px;color:#8b8e93;transform:scaleX(0.8430);-webkit-text-stroke:0.22px;">0.86995</span><span class="t" id="t13" style="left:736.3px;top:317.00px;font-size:8.6px;color:#8b8e93;transform:scaleX(0.8430);-webkit-text-stroke:0.22px;">0.86500</span><span class="t" id="t14" style="left:736.3px;top:343.50px;font-size:8.6px;color:#8b8e93;transform:scaleX(0.8430);-webkit-text-stroke:0.22px;">0.85990</span><span class="t" id="t15" style="left:736.3px;top:370.20px;font-size:8.6px;color:#8b8e93;transform:scaleX(0.8430);-webkit-text-stroke:0.22px;">0.85495</span><span class="t" id="t16" style="left:734.6px;top:380.00px;font-size:8.6px;color:#8b8e93;transform:scaleX(0.8398);-webkit-text-stroke:0.22px;">0.00713</span><span class="t" id="t17" style="left:734.2px;top:436.30px;font-size:8.6px;color:#8b8e93;transform:scaleX(0.8545);-webkit-text-stroke:0.22px;">0.00</span><span class="t" id="t18" style="left:734.6px;top:483.00px;font-size:8.6px;color:#8b8e93;transform:scaleX(0.8533);-webkit-text-stroke:0.22px;">-0.006</span><span class="t" id="t19" style="left:6.0px;top:381.20px;font-size:8.6px;color:#8b8e93;transform:scaleX(0.8749);-webkit-text-stroke:0.22px;">scMTF MACD (12,26,9,0,0,0,1) 0.00307 0.00279</span><span class="t" id="t20" style="left:1.9px;top:496.00px;font-size:8.6px;color:#8b8e93;transform:scaleX(0.8578);-webkit-text-stroke:0.22px;">15 Mar 2023</span><span class="t" id="t21" style="left:52.9px;top:496.00px;font-size:8.6px;color:#8b8e93;transform:scaleX(0.8755);-webkit-text-stroke:0.22px;">6 Apr 2023</span><span class="t" id="t22" style="left:104.2px;top:496.00px;font-size:8.6px;color:#8b8e93;transform:scaleX(0.8650);-webkit-text-stroke:0.22px;">28 Apr 2023</span><span class="t" id="t23" style="left:155.5px;top:496.00px;font-size:8.6px;color:#8b8e93;transform:scaleX(0.8755);-webkit-text-stroke:0.22px;">22 May 2023</span><span class="t" id="t24" style="left:206.9px;top:496.00px;font-size:8.6px;color:#8b8e93;transform:scaleX(0.8264);-webkit-text-stroke:0.22px;">13 Jun 2023</span><span class="t" id="t25" style="left:258.2px;top:496.00px;font-size:8.6px;color:#8b8e93;transform:scaleX(0.8268);-webkit-text-stroke:0.22px;">5 Jul 2023</span><span class="t" id="t26" style="left:309.4px;top:496.00px;font-size:8.6px;color:#8b8e93;transform:scaleX(0.8236);-webkit-text-stroke:0.22px;">27 Jul 2023</span><span class="t" id="t27" style="left:361.0px;top:496.00px;font-size:8.6px;color:#8b8e93;transform:scaleX(0.8492);-webkit-text-stroke:0.22px;">18 Aug 2023</span><span class="t" id="t28" style="left:412.2px;top:496.00px;font-size:8.6px;color:#8b8e93;transform:scaleX(0.8377);-webkit-text-stroke:0.22px;">11 Sep 2023</span><span class="t" id="t29" style="left:463.4px;top:496.00px;font-size:8.6px;color:#8b8e93;transform:scaleX(0.8467);-webkit-text-stroke:0.22px;">3 Oct 2023</span><span class="t" id="t30" style="left:514.3px;top:496.00px;font-size:8.6px;color:#8b8e93;transform:scaleX(0.8478);-webkit-text-stroke:0.22px;">25 Oct 2023</span><span class="t" id="t31" style="left:565.6px;top:496.00px;font-size:8.6px;color:#8b8e93;transform:scaleX(0.8700);-webkit-text-stroke:0.22px;">16 Nov 2023</span><span class="t" id="t32" style="left:616.8px;top:496.00px;font-size:8.6px;color:#8b8e93;transform:scaleX(0.8461);-webkit-text-stroke:0.22px;">8 Dec 2023</span><span class="t" id="t33" style="left:107.9px;top:69.32px;font-size:9.5px;color:#ffffff;transform:scaleX(1.0005);">Custom Indicator - SC MTF Macd for MT4 with alert</span><span class="t" id="t34" style="left:113.3px;top:96.42px;font-size:10.0px;color:#151515;transform:scaleX(0.8110);-webkit-text-stroke:0.3px;">About</span><span class="t" id="t35" style="left:146.2px;top:96.42px;font-size:10.0px;color:#151515;transform:scaleX(0.7911);-webkit-text-stroke:0.3px;">Common</span><span class="t" id="t36" style="left:189.2px;top:95.02px;font-size:10.0px;color:#151515;transform:scaleX(0.8110);-webkit-text-stroke:0.3px;">Inputs</span><span class="t" id="t37" style="left:222.0px;top:96.42px;font-size:10.0px;color:#151515;transform:scaleX(0.7957);-webkit-text-stroke:0.3px;">Colors</span><span class="t" id="t38" style="left:256.2px;top:96.42px;font-size:10.0px;color:#151515;transform:scaleX(0.8337);-webkit-text-stroke:0.3px;">Levels</span><span class="t" id="t39" style="left:290.7px;top:96.42px;font-size:10.0px;color:#151515;transform:scaleX(0.8130);-webkit-text-stroke:0.3px;">Visualization</span><span class="t" id="t40" style="left:122.6px;top:122.12px;font-size:10.0px;color:#151515;transform:scaleX(0.8261);-webkit-text-stroke:0.3px;">Variable</span><span class="t" id="t41" style="left:297.2px;top:122.12px;font-size:10.0px;color:#151515;transform:scaleX(0.8211);-webkit-text-stroke:0.3px;">Value</span><span class="t" id="t42" style="left:134.7px;top:139.72px;font-size:10.0px;color:#151515;transform:scaleX(0.8111);-webkit-text-stroke:0.3px;">MACD timeframe</span><span class="t" id="t43" style="left:294.4px;top:139.72px;font-size:10.0px;color:#151515;transform:scaleX(0.8067);-webkit-text-stroke:0.3px;">Current timeframe</span><span class="t" id="t44" style="left:134.7px;top:155.72px;font-size:10.0px;color:#151515;transform:scaleX(0.7986);-webkit-text-stroke:0.3px;">Bar shift</span><span class="t" id="t45" style="left:294.4px;top:155.72px;font-size:10.0px;color:#151515;transform:scaleX(0.9348);-webkit-text-stroke:0.3px;">0</span><span class="t" id="t46" style="left:134.7px;top:171.72px;font-size:10.0px;color:#151515;transform:scaleX(0.8381);-webkit-text-stroke:0.3px;">MACD Fast EMA</span><span class="t" id="t47" style="left:294.4px;top:171.72px;font-size:10.0px;color:#151515;transform:scaleX(0.8270);-webkit-text-stroke:0.3px;">12</span><span class="t" id="t48" style="left:134.7px;top:187.72px;font-size:10.0px;color:#151515;transform:scaleX(0.8384);-webkit-text-stroke:0.3px;">MACD Slow EMA</span><span class="t" id="t49" style="left:294.4px;top:187.72px;font-size:10.0px;color:#151515;transform:scaleX(0.8270);-webkit-text-stroke:0.3px;">26</span><span class="t" id="t50" style="left:134.7px;top:203.72px;font-size:10.0px;color:#151515;transform:scaleX(0.8348);-webkit-text-stroke:0.3px;">MACD SMA</span><span class="t" id="t51" style="left:294.4px;top:203.72px;font-size:10.0px;color:#151515;transform:scaleX(0.9348);-webkit-text-stroke:0.3px;">9</span><span class="t" id="t52" style="left:134.7px;top:219.72px;font-size:10.0px;color:#151515;transform:scaleX(0.8282);-webkit-text-stroke:0.3px;">Applied Price</span><span class="t" id="t53" style="left:294.4px;top:219.72px;font-size:10.0px;color:#151515;transform:scaleX(0.8155);-webkit-text-stroke:0.3px;">Close price</span><span class="t" id="t54" style="left:134.7px;top:235.72px;font-size:10.0px;color:#151515;transform:scaleX(0.8238);-webkit-text-stroke:0.3px;">Stepless (linear interpolation)</span><span class="t" id="t55" style="left:294.4px;top:235.72px;font-size:10.0px;color:#151515;transform:scaleX(0.8065);-webkit-text-stroke:0.3px;">true</span><span class="t" id="t56" style="left:134.7px;top:251.72px;font-size:10.0px;color:#151515;transform:scaleX(0.8499);-webkit-text-stroke:0.3px;">Show level</span><span class="t" id="t57" style="left:294.4px;top:251.72px;font-size:10.0px;color:#151515;transform:scaleX(0.8065);-webkit-text-stroke:0.3px;">true</span><span class="t" id="t58" style="left:134.7px;top:267.72px;font-size:10.0px;color:#151515;transform:scaleX(0.8393);-webkit-text-stroke:0.3px;">Adjust a level of MACD</span><span class="t" id="t59" style="left:294.4px;top:267.72px;font-size:10.0px;color:#151515;transform:scaleX(0.8773);-webkit-text-stroke:0.3px;">0.0</span><span class="t" id="t60" style="left:134.7px;top:283.72px;font-size:10.0px;color:#151515;transform:scaleX(0.8292);-webkit-text-stroke:0.3px;">-------------- Alert Settings --------------</span><span class="t" id="t61" style="left:294.4px;top:283.72px;font-size:10.0px;color:#151515;transform:scaleX(0.7744);-webkit-text-stroke:0.3px;">----------------------------------------------------</span><span class="t" id="t62" style="left:134.7px;top:299.72px;font-size:10.0px;color:#151515;transform:scaleX(0.8343);-webkit-text-stroke:0.3px;clip-path:inset(0 0 7.1px 0);">Enable or disable all alert functions</span><span class="t" id="t63" style="left:294.4px;top:299.72px;font-size:10.0px;color:#151515;transform:scaleX(0.8000);-webkit-text-stroke:0.3px;clip-path:inset(0 0 7.1px 0);">false</span><span class="t" id="t64" style="left:519.5px;top:265.32px;font-size:10.0px;color:#151515;transform:scaleX(0.8315);-webkit-text-stroke:0.3px;">Load</span><span class="t" id="t65" style="left:519.5px;top:291.82px;font-size:10.0px;color:#151515;transform:scaleX(0.8422);-webkit-text-stroke:0.3px;">Save</span><span class="t" id="t66" style="left:411.6px;top:322.32px;font-size:10.0px;color:#151515;transform:scaleX(0.8441);-webkit-text-stroke:0.3px;">OK</span><span class="t" id="t67" style="left:467.0px;top:322.32px;font-size:10.0px;color:#151515;transform:scaleX(0.8609);-webkit-text-stroke:0.3px;">Отмена</span><span class="t" id="t68" style="left:536.4px;top:322.32px;font-size:10.0px;color:#151515;transform:scaleX(0.8000);-webkit-text-stroke:0.3px;">Reset</span>
<div id="pbox"></div>
<span class="t" style="left:736.2px;top:126.9px;font-size:8.6px;color:#fff;transform:scaleX(0.8430)" id="pb">0.90138</span>
<svg style="position:absolute;left:0;top:0;pointer-events:none" width="768" height="512" viewBox="0 0 768 512"><defs><filter id="hls" x="-5%" y="-20%" width="110%" height="150%"><feDropShadow dx="1.2" dy="2" stdDeviation="1.6" flood-color="#000" flood-opacity="0.55"/></filter></defs><rect x="108.4" y="168.4" width="380" height="53.1" fill="none" stroke="#fa4246" stroke-width="2.4" filter="url(#hls)"/></svg>
</body></html>
